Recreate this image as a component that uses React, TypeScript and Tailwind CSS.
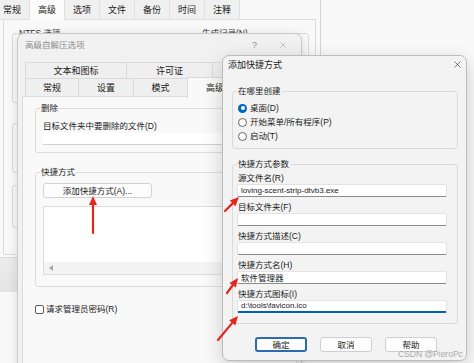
import { X } from 'lucide-react';

type Pt = [number, number];

function Arrow({ from, to }: { from: Pt; to: Pt }) {
  const [x1, y1] = from;
  const [x2, y2] = to;
  const len = Math.hypot(x2 - x1, y2 - y1);
  const ux = (x2 - x1) / len;
  const uy = (y2 - y1) / len;
  const bx = x2 - ux * 9;
  const by = y2 - uy * 9;
  const head = `${x2},${y2} ${bx - uy * 4},${by + ux * 4} ${bx + uy * 4},${by - ux * 4}`;
  return (
    <g>
      <line x1={x1} y1={y1} x2={bx} y2={by} stroke="#e3261f" strokeWidth={2.2} strokeLinecap="round" />
      <polygon points={head} fill="#e3261f" />
    </g>
  );
}

function BackWindow() {
  const tabs = ['常规', '高级', '选项', '文件', '备份', '时间', '注释'];
  return (
    <div className="absolute left-[-6px] top-0 w-[327px] h-[292px] flex flex-col bg-[#f9f9f9] border-r border-[#d4d4d4]">
      <div className="flex h-[20px] shrink-0 pl-[1px]">
        {tabs.map((t) => (
          <div
            key={t}
            className={
              t === '高级'
                ? 'w-[35px] flex items-center justify-center text-[9px] bg-[#fbfbfb] border-r border-[#e0e0e0]'
                : 'w-[35px] flex items-center justify-center text-[9px] bg-[#f0f0f0] border-r border-b border-[#e0e0e0]'
            }
          >
            {t}
          </div>
        ))}
        <div className="flex-1 mr-[4px] border-b border-[#dcdcdc]" />
      </div>
      <div className="h-[235px] shrink-0 ml-[9px] mr-[4px] border-x border-b border-[#dcdcdc] flex gap-[8px] pl-[8px] pr-[6px] pt-[7px]">
        <div className="w-[175px] flex flex-col">
          <fieldset className="h-[76px] border border-[#dcdcdc] rounded-[3px] px-[6px]">
            <legend className="text-[#333]">NTFS 选项</legend>
          </fieldset>
          <div className="mt-[20px] h-[50px] border border-[#dcdcdc] rounded-[3px]" />
          <div className="mt-[12px] h-[43px] border border-[#dcdcdc] rounded-[3px]" />
        </div>
        <div className="flex-1 flex flex-col">
          <fieldset className="h-[108px] border border-[#dcdcdc] rounded-[3px] px-[6px]">
            <legend className="text-[#333]">生成记录(N)</legend>
          </fieldset>
        </div>
      </div>
      <div className="flex-1 mt-[2px] border-t border-[#dadada] bg-gradient-to-b from-[#ececec] to-[#e4e4e4]" />
    </div>
  );
}

function SfxWindow() {
  const backTabs = [
    { label: '文本和图标', w: 'w-[101px]' },
    { label: '许可证', w: 'w-[86px]' },
    { label: '', w: 'w-[86px]' },
  ];
  const frontTabs = [
    { label: '常规', w: 'w-[53px]' },
    { label: '设置', w: 'w-[55px]' },
    { label: '模式', w: 'w-[54px]' },
  ];
  return (
    <div className="absolute left-[17px] top-[33px] w-[285px] h-[345px] flex flex-col rounded-t-[7px] border border-[#c9c9c9] bg-[#f1f1f1] shadow-[0_2px_12px_rgba(0,0,0,0.12)]">
      <div className="h-[21px] shrink-0 flex items-center pl-[7px] pr-[13px] text-[#8d8d8d]">
        <span>高级自解压选项</span>
        <span className="ml-auto mr-[21px] text-[9px]">?</span>
        <X size={10} strokeWidth={1.1} />
      </div>

      <div className="mt-[7px] mx-[4px] flex flex-col shrink-0">
        <div className="flex h-[16px] pl-[3px]">
          {backTabs.map((t, i) => (
            <div
              key={i}
              className={`${t.w} shrink-0 flex items-center justify-center border-t border-l border-[#dadada] bg-[#efefef] text-[9px]`}
            >
              {t.label}
            </div>
          ))}
        </div>
        <div className="flex h-[19px] pl-[3px] border-b border-[#dcdcdc]">
          {frontTabs.map((t) => (
            <div
              key={t.label}
              className={`${t.w} shrink-0 flex items-center justify-center border-t border-l border-[#dadada] bg-[#efefef] text-[9px]`}
            >
              {t.label}
            </div>
          ))}
          <div className="relative w-[56px] shrink-0 h-[21px] -mt-[1px] flex items-center justify-center border-t border-x border-[#dadada] bg-[#f9f9f9] text-[9px]">
            高级
          </div>
        </div>
      </div>

      <div className="flex-1 mx-[4px] bg-[#f9f9f9] border-x border-[#dcdcdc] pl-[12px] pr-[8px] pt-[5px] flex flex-col">
        <fieldset className="border border-[#dcdcdc] rounded-[3px] pl-[4px] pr-[6px] pb-[7px]">
          <legend className="px-[1px]">删除</legend>
          <div className="ml-[3px] mt-[6px]">目标文件夹中要删除的文件(D)</div>
          <div className="ml-[3px] mt-[1px] h-[12px] bg-white border-b border-[#d2d2d2]" />
        </fieldset>

        <fieldset className="mt-[13px] border border-[#dcdcdc] rounded-[3px] pl-[4px] pr-[6px] pb-[11px]">
          <legend className="px-[1px]">快捷方式</legend>
          <button
            type="button"
            className="block ml-[3px] mt-[5px] w-[109px] h-[15px] rounded-[3px] border border-[#d2d2d2] bg-[#fdfdfd] text-center"
          >
            添加快捷方式(A)...
          </button>
          <div className="ml-[3px] mt-[8px] h-[69px] bg-white border border-[#dcdcdc] flex flex-col justify-end">
            <div className="h-[12px] bg-[#f4f4f4] flex items-center pl-[5px]">
              <svg width="4" height="6" viewBox="0 0 4 6">
                <polygon points="4,0 4,6 0,3" fill="#a6a6a6" />
              </svg>
            </div>
          </div>
        </fieldset>

        <div className="mt-[16px] flex items-center gap-[2px]">
          <span className="w-[9px] h-[9px] rounded-[2px] border border-[#5a5a5a] bg-white" />
          <span>请求管理员密码(R)</span>
        </div>
      </div>
    </div>
  );
}

function ShortcutDialog() {
  const places = [
    { label: '桌面(D)', on: true },
    { label: '开始菜单/所有程序(P)', on: false },
    { label: '启动(T)', on: false },
  ];
  const fields = [
    { label: '源文件名(R)', value: 'loving-scent-strip-dtvb3.exe', cjk: false, focused: false },
    { label: '目标文件夹(F)', value: '', cjk: false, focused: false },
    { label: '快捷方式描述(C)', value: '', cjk: false, focused: false },
    { label: '快捷方式名(H)', value: '软件管理器', cjk: true, focused: false },
    { label: '快捷方式图标(I)', value: 'd:\\tools\\favicon.ico', cjk: false, focused: true },
  ];
  return (
    <div className="absolute left-[222px] top-[55px] w-[245px] h-[306px] flex flex-col rounded-[7px] border border-[#bcbcbc] bg-[#f3f3f3] shadow-[0_6px_20px_rgba(0,0,0,0.18)]">
      <div className="h-[17px] shrink-0 flex items-center pl-[5px] pr-[3px]">
        <span className="text-[9px]">添加快捷方式</span>
        <X className="ml-auto" size={11} strokeWidth={1.2} />
      </div>

      <div className="pl-[9px] pr-[8px] flex flex-col">
        <fieldset className="mt-[12px] border border-[#dadada] rounded-[3px] pl-[4px] pr-[10px] pb-[5px]">
          <legend className="px-[1px]">在哪里创建</legend>
          <div className="mt-[4px] flex flex-col">
            {places.map((p) => (
              <div key={p.label} className="h-[14px] ml-[1px] flex items-center gap-[3px]">
                {p.on ? (
                  <span className="w-[9px] h-[9px] rounded-full bg-[#0067c0] flex items-center justify-center">
                    <span className="w-[4px] h-[4px] rounded-full bg-white" />
                  </span>
                ) : (
                  <span className="w-[9px] h-[9px] rounded-full border border-[#666] bg-[#fafafa]" />
                )}
                <span>{p.label}</span>
              </div>
            ))}
          </div>
        </fieldset>

        <fieldset className="mt-[9px] border border-[#dadada] rounded-[3px] pl-[4px] pr-[10px] pb-[10px]">
          <legend className="px-[1px]">快捷方式参数</legend>
          <div className="mt-[2px] flex flex-col gap-[4px]">
            {fields.map((f) => (
              <div key={f.label} className="flex flex-col">
                <div className="pl-[1px]">{f.label}</div>
                <div
                  className={
                    f.focused
                      ? 'h-[13px] bg-white border border-[#e2e2e2] border-b-2 border-b-[#0063b1] rounded-[2px] flex items-center pl-[3px] text-[8px]'
                      : f.cjk
                        ? 'h-[13px] bg-white border border-[#e2e2e2] border-b-[#8c8c8c] rounded-[2px] flex items-center pl-[3px] text-[8.5px]'
                        : 'h-[13px] bg-white border border-[#e2e2e2] border-b-[#8c8c8c] rounded-[2px] flex items-center pl-[3px] text-[8px]'
                  }
                >
                  {f.value}
                </div>
              </div>
            ))}
          </div>
        </fieldset>

        <div className="mt-[13px] flex justify-center gap-[13px] pl-[2px]">
          <button type="button" className="w-[52px] h-[15px] rounded-[3px] border-2 border-[#2d6bb0] bg-[#fdfdfd]">
            确定
          </button>
          <button type="button" className="w-[52px] h-[15px] rounded-[3px] border border-[#cfcfcf] bg-[#fdfdfd]">
            取消
          </button>
          <button type="button" className="w-[52px] h-[15px] rounded-[3px] border border-[#cfcfcf] bg-[#fdfdfd]">
            帮助
          </button>
        </div>
      </div>
    </div>
  );
}

export default function App() {
  return (
    <div className="relative w-[474px] h-[363px] overflow-hidden bg-[#f9f9f9] text-[#1a1a1a] font-['Liberation_Sans','Noto_Sans_CJK_SC',sans-serif] text-[8.5px] leading-[12px]">
      <BackWindow />
      <SfxWindow />
      <ShortcutDialog />
      <svg className="absolute inset-0 pointer-events-none" width={474} height={363}>
        <Arrow from={[93, 233]} to={[93, 196]} />
        <Arrow from={[225, 211]} to={[239, 197]} />
        <Arrow from={[227, 293]} to={[238, 278]} />
        <Arrow from={[218, 340]} to={[238, 316]} />
      </svg>
      <span className="absolute left-[398px] top-[349px] text-[8.5px] leading-[10px] text-[#a9a9a9]">CSDN @PieroPc</span>
    </div>
  );
}
